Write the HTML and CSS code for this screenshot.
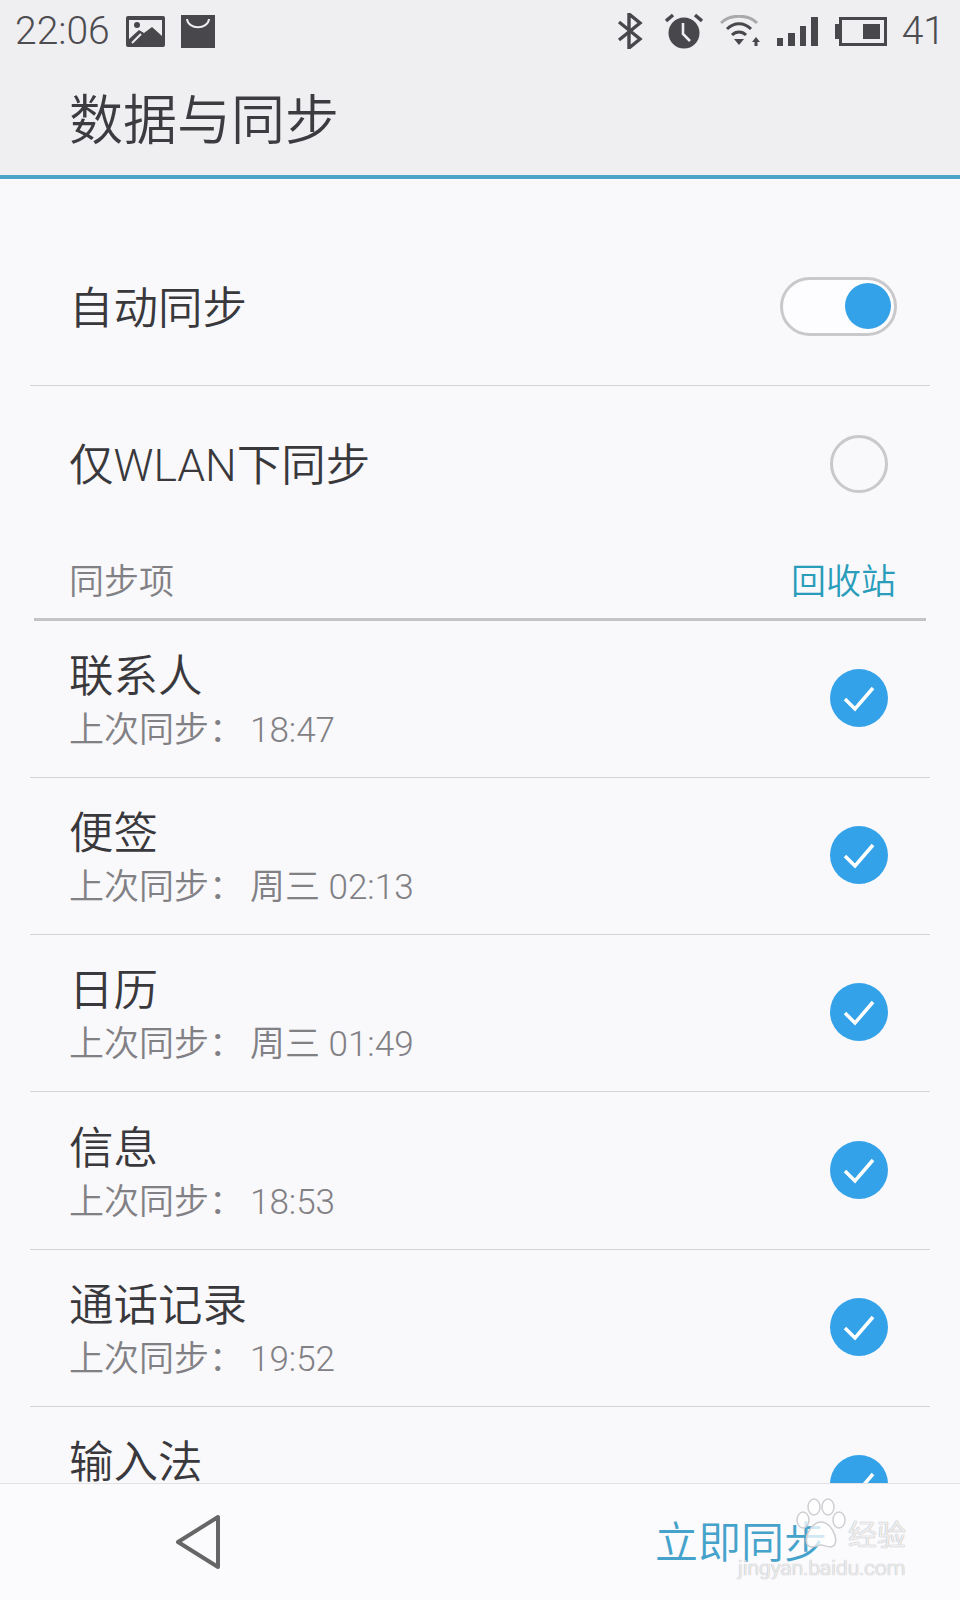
FILE: index.html
```html
<!DOCTYPE html>
<html lang="zh-CN">
<head>
  <meta charset="UTF-8" />
  <title>数据与同步</title>
  <link rel="stylesheet" href="styles.css">
</head>
<body>
  <div class="phone">
    <div class="header">
      <div class="status-bar">
        <span class="clock">22:06</span>
        <svg class="ic-image" width="39" height="31" viewBox="0 0 39 31">
          <rect width="39" height="31" rx="2" fill="#48474b"/>
          <path d="M3 4 H36 V20 L26 11 L18 17 L13 14 L3 23Z" fill="#efeef1"/>
          <circle cx="11" cy="9" r="3" fill="#48474b"/>
          <path d="M6 27 L15 18" stroke="#efeef1" stroke-width="2"/>
        </svg>
        <svg class="ic-bag" width="34" height="33" viewBox="0 0 34 33">
          <rect width="34" height="33" fill="#48474b"/>
          <path d="M6 4 C7 15 27 15 28 4" fill="none" stroke="#efeef1" stroke-width="2"/>
        </svg>
        <div class="status-right">
          <svg class="ic-bt" width="26" height="36" viewBox="0 0 26 36">
            <path d="M2 9 L23 26 L12 35 V1 L23 10 L2 27" fill="none" stroke="#48474b" stroke-width="3.4"/>
          </svg>
          <svg width="38" height="36" viewBox="0 0 38 36">
            <circle cx="19" cy="20" r="15.5" fill="#48474b"/>
            <path d="M1 8 L8 2 M37 8 L30 2" stroke="#48474b" stroke-width="3.5"/>
            <path d="M18 10 V21 L25 28" fill="none" stroke="#efeef1" stroke-width="2.6"/>
          </svg>
          <svg width="40" height="32" viewBox="0 0 40 32">
            <path d="M1 8 C10 -1 28 -1 37 8" fill="none" stroke="#a9a9ab" stroke-width="3"/>
            <path d="M7 14 C14 7 24 7 31 14 M12 20 C16 16 22 16 26 20" fill="none" stroke="#48474b" stroke-width="3"/>
            <path d="M14 24 H24 L19 30Z" fill="#48474b"/>
            <path d="M36 22 L40 27 H37.5 V31 H34.5 V27 H32Z" fill="#48474b"/>
          </svg>
          <div class="signal">
            <i class="s1"></i><i class="s2"></i><i class="s3"></i><i class="s4"></i>
          </div>
          <div class="battery">
            <span class="battery-tip"></span>
            <span class="battery-body"><span class="battery-level"></span></span>
          </div>
          <span class="batt-num">41</span>
        </div>
      </div>
      <h1 class="title">数据与同步</h1>
    </div>

    <div class="content">
      <div class="row setting">
        <span class="row-title">自动同步</span>
        <span class="toggle"><span class="knob"></span></span>
      </div>
      <div class="row setting no-line">
        <span class="row-title">仅WLAN下同步</span>
        <span class="radio"></span>
      </div>
      <div class="section">
        <span>同步项</span>
        <span class="recycle">回收站</span>
      </div>

      <div class="row">
        <div class="row-text">
          <div class="row-title">联系人</div>
          <div class="row-sub">上次同步：<span class="time">18:47</span></div>
        </div>
        <svg class="check" viewBox="0 0 58 58"><circle cx="29" cy="29" r="29"/><path d="M15 30 L25 40 L43 19"/></svg>
      </div>
      <div class="row">
        <div class="row-text">
          <div class="row-title">便签</div>
          <div class="row-sub">上次同步：<span class="time">周三 02:13</span></div>
        </div>
        <svg class="check" viewBox="0 0 58 58"><circle cx="29" cy="29" r="29"/><path d="M15 30 L25 40 L43 19"/></svg>
      </div>
      <div class="row">
        <div class="row-text">
          <div class="row-title">日历</div>
          <div class="row-sub">上次同步：<span class="time">周三 01:49</span></div>
        </div>
        <svg class="check" viewBox="0 0 58 58"><circle cx="29" cy="29" r="29"/><path d="M15 30 L25 40 L43 19"/></svg>
      </div>
      <div class="row">
        <div class="row-text">
          <div class="row-title">信息</div>
          <div class="row-sub">上次同步：<span class="time">18:53</span></div>
        </div>
        <svg class="check" viewBox="0 0 58 58"><circle cx="29" cy="29" r="29"/><path d="M15 30 L25 40 L43 19"/></svg>
      </div>
      <div class="row">
        <div class="row-text">
          <div class="row-title">通话记录</div>
          <div class="row-sub">上次同步：<span class="time">19:52</span></div>
        </div>
        <svg class="check" viewBox="0 0 58 58"><circle cx="29" cy="29" r="29"/><path d="M15 30 L25 40 L43 19"/></svg>
      </div>
      <div class="row">
        <div class="row-text">
          <div class="row-title">输入法</div>
          <div class="row-sub">上次同步：</div>
        </div>
        <svg class="check" viewBox="0 0 58 58"><circle cx="29" cy="29" r="29"/><path d="M15 30 L25 40 L43 19"/></svg>
      </div>
    </div>

    <div class="footer">
      <svg class="back" width="46" height="56" viewBox="0 0 46 56">
        <path d="M43 3 V53 L3 28Z" fill="none" stroke="#666" stroke-width="4" stroke-linejoin="round"/>
      </svg>
      <span class="sync-now">立即同步</span>
    </div>

    <!-- baidu watermark sits over the footer -->
    <div class="watermark">
      <svg class="paw" width="54" height="56" viewBox="0 0 54 54">
        <g fill="#fff" fill-opacity="0.75" stroke="#cfcfd2" stroke-width="1.5">
          <ellipse cx="9" cy="22" rx="6" ry="8"/>
          <ellipse cx="20" cy="9" rx="6" ry="8"/>
          <ellipse cx="34" cy="9" rx="6" ry="8"/>
          <ellipse cx="45" cy="22" rx="6" ry="8"/>
          <path d="M27 24 C36 24 44 38 41 46 C38 52 31 47 27 47 C23 47 16 52 13 46 C10 38 18 24 27 24Z"/>
        </g>
      </svg>
      <span class="wm-jing">经验</span>
      <span class="wm-url">jingyan.baidu.com</span>
    </div>
  </div>
</body>
</html>
```

FILE: styles.css
```css
html, body {
  margin: 0;
  padding: 0;
}

body {
  background: #f9f8fb;
  font-family: Roboto, "Noto Sans CJK SC", sans-serif;
  font-weight: 350;
  color: #39383c;
}

.phone {
  position: relative;
  width: 960px;
  height: 1600px;
  display: flex;
  flex-direction: column;
  overflow: hidden;
}

/* header + status bar */
.header {
  height: 175px;
  background: #efeef1;
  border-bottom: 4px solid #4ba4c8;
  flex-shrink: 0;
}

.status-bar {
  height: 62px;
  display: flex;
  align-items: center;
  padding: 0 15px 0 15px;
  color: #4d4c50;
}

.clock {
  font-size: 39px;
  font-weight: 300;
  width: 111px;
}

.ic-bag {
  margin-left: 16px;
}

.status-right {
  margin-left: auto;
  display: flex;
  align-items: center;
  gap: 17px;
}

.ic-bt {
  margin-right: 5px;
}

.signal {
  display: flex;
  align-items: flex-end;
  gap: 5px;
  height: 29px;
}

.signal i {
  display: block;
  width: 6.5px;
  background: #48474b;
}

.signal .s1 { height: 8px; }
.signal .s2 { height: 13px; }
.signal .s3 { height: 20px; }
.signal .s4 { height: 29px; }

.battery {
  display: flex;
  align-items: center;
}

.battery-tip {
  width: 4px;
  height: 15px;
  background: #48474b;
}

.battery-body {
  width: 48px;
  height: 29px;
  box-sizing: border-box;
  border: 3px solid #48474b;
  padding: 4px;
  display: flex;
  justify-content: flex-end;
}

.battery-level {
  width: 17px;
  background: #48474b;
}

.batt-num {
  margin-left: -2px;
  font-size: 39px;
  font-weight: 300;
}

.title {
  margin: 0;
  padding-left: 69px;
  font-size: 54px;
  font-weight: 350;
  line-height: 120px;
  color: #3c3b3f;
}

/* list */
.content {
  flex: 1;
  min-height: 0;
  overflow: hidden;
  padding: 50px 30px 0;
}

.row {
  height: 157.3px;
  box-sizing: border-box;
  display: flex;
  align-items: center;
  justify-content: space-between;
  padding: 0 42px 0 39px;
  border-bottom: 1px solid #d4d3d6;
}

.row.no-line {
  border-bottom: none;
}

.row-text {
  padding-top: 5px;
}

.row-title {
  font-size: 44.5px;
  line-height: 54px;
}

.setting .row-title {
  padding-top: 3px;
}

.row-sub {
  margin-top: 5px;
  font-size: 35px;
  line-height: 44px;
  color: #818084;
}

.time {
  margin-left: 6px;
}

.section {
  height: 77px;
  box-sizing: border-box;
  margin: 0 4px;
  padding: 0 30px 4px 35px;
  display: flex;
  align-items: center;
  justify-content: space-between;
  border-bottom: 3px solid #c4c3c6;
  font-size: 35px;
  color: #818084;
}

.recycle {
  color: #2a9dbb;
}

.toggle {
  width: 117px;
  height: 59px;
  box-sizing: border-box;
  margin: 0 -9px 2px 0;
  border: 3px solid #c9c8cb;
  border-radius: 30px;
  background: #fdfcfe;
  display: flex;
  justify-content: flex-end;
  align-items: center;
  padding-right: 3px;
}

.knob {
  width: 46px;
  height: 46px;
  border-radius: 50%;
  background: #34a2e8;
}

.radio {
  width: 58px;
  height: 58px;
  box-sizing: border-box;
  margin-bottom: 2px;
  border: 3px solid #c9c8cb;
  border-radius: 50%;
}

.check {
  width: 58px;
  height: 58px;
  flex-shrink: 0;
  margin-bottom: 2px;
}

.check circle {
  fill: #34a2e8;
}

.check path {
  fill: none;
  stroke: #fff;
  stroke-width: 3.5;
}

/* footer */
.footer {
  height: 117px;
  flex-shrink: 0;
  box-sizing: border-box;
  border-top: 1px solid #e2e1e4;
  background: #fbfafc;
  display: flex;
  align-items: center;
  justify-content: space-between;
  padding: 0 133px 0 175px;
}

.sync-now {
  font-size: 43px;
  color: #45a3cb;
  padding-bottom: 6px;
}

.watermark {
  position: absolute;
  left: 738px;
  top: 1495px;
  width: 172px;
  height: 90px;
}

.paw {
  position: absolute;
  left: 56px;
  top: 2px;
}

.wm-jing {
  position: absolute;
  left: 110px;
  top: 24px;
  font-size: 29px;
  line-height: 34px;
  color: rgba(255, 255, 255, 0.8);
  text-shadow: 0 0 1px #b5b5b8, 0 0 1px #b5b5b8;
}

.wm-url {
  position: absolute;
  left: 0;
  top: 59px;
  font-size: 21px;
  line-height: 28px;
  font-weight: 300;
  white-space: nowrap;
  color: rgba(255, 255, 255, 0.8);
  text-shadow: 0 0 1px #b5b5b8, 0 0 1px #b5b5b8;
}
```
